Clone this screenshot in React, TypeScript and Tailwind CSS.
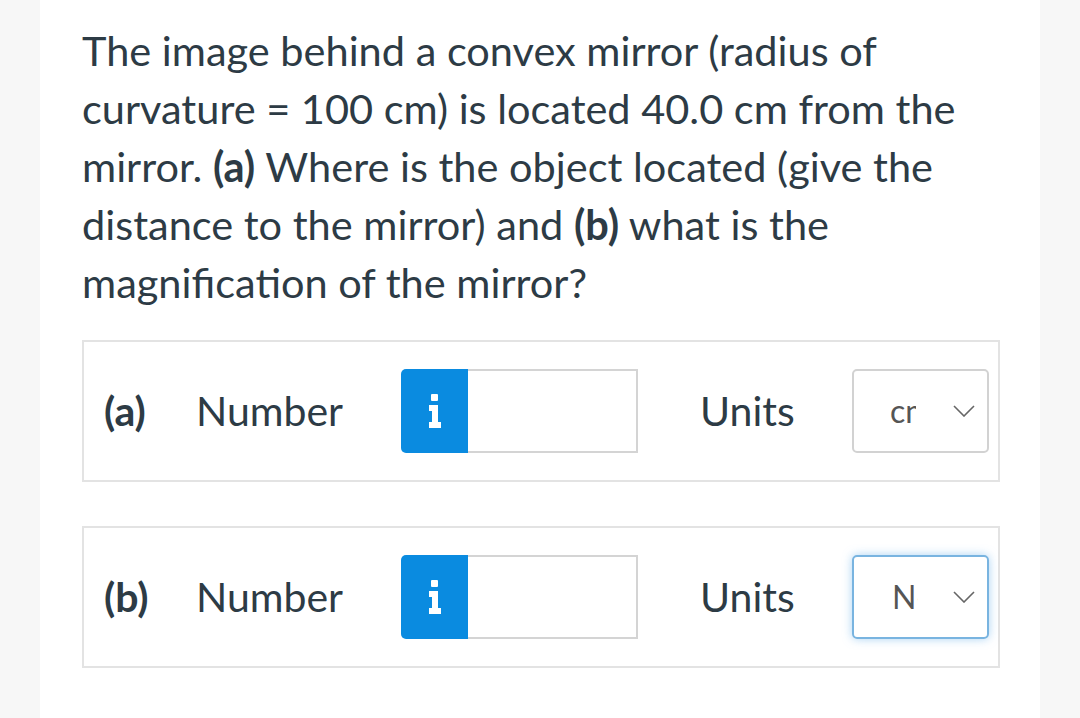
import React from 'react';

const InfoIcon: React.FC = () => (
    <svg width="14" height="34" viewBox="0 0 14 34" fill="#fff">
        <rect x="3" y="0" width="7" height="7" rx="1" />
        <path d="M1 11h9v17h3v6H1v-6h3V17H1z" />
    </svg>
);

const Chevron: React.FC = () => (
    <svg width="22" height="12" viewBox="0 0 22 12" fill="none" stroke="#666" strokeWidth="1.6">
        <path d="M1 1l10 10L21 1" />
    </svg>
);

const AnswerRow: React.FC<{ part: string; unit: string; focused?: boolean }> = ({ part, unit, focused }) => {
    return (
        <div className="border-2 border-[#e3e3e3] flex items-center h-[142px] pl-[20px]">
            <span className="w-[92px] font-bold">{part}</span>
            <span className="w-[205px]">Number</span>
            <div className="flex h-[84px]">
                <div className="w-[67px] bg-[#0a8be0] rounded-l-[5px] flex items-center justify-center">
                    <InfoIcon />
                </div>
                <div className="w-[170px] border-2 border-l-0 border-[#d4d4d4] bg-white"></div>
            </div>
            <span className="ml-[62px] w-[152px]">Units</span>
            <div
                className={
                    focused
                        ? 'w-[137px] h-[84px] rounded-[5px] border-2 border-[#79b4e0] shadow-[0_0_10px_rgba(102,175,233,0.55)] flex items-center pl-[38px] pr-[12px]'
                        : 'w-[137px] h-[84px] rounded-[5px] border-2 border-[#d2d2d2] flex items-center pl-[36px] pr-[12px]'
                }
            >
                <span className="w-[26px] overflow-hidden whitespace-nowrap text-[32px] text-[#555]">{unit}</span>
                <span className="ml-auto flex"><Chevron /></span>
            </div>
        </div>
    );
};

const App: React.FC = () => {
    return (
        <div className="min-h-screen bg-[#f7f7f7] flex justify-center" style={{ fontFamily: 'Lato, "Open Sans", sans-serif' }}>
            <div className="w-[1000px] h-[718px] bg-white pl-[42px] pr-[40px] pt-[21px] text-[#2d3b45]">
                <p className="text-[41.5px] leading-[58px]">
                    The image behind a convex mirror (radius of curvature = 100 cm) is located 40.0 cm from the
                    mirror. <b>(a)</b> Where is the object located (give the distance to the mirror) and{' '}
                    <b>(b)</b> what is the magnification of the mirror?
                </p>

                <div className="mt-[29px] flex flex-col gap-[44px] text-[41px]">
                    <AnswerRow part="(a)" unit="cm" />
                    <AnswerRow part="(b)" unit="N·m" focused />
                </div>
            </div>
        </div>
    );
};

export default App;
